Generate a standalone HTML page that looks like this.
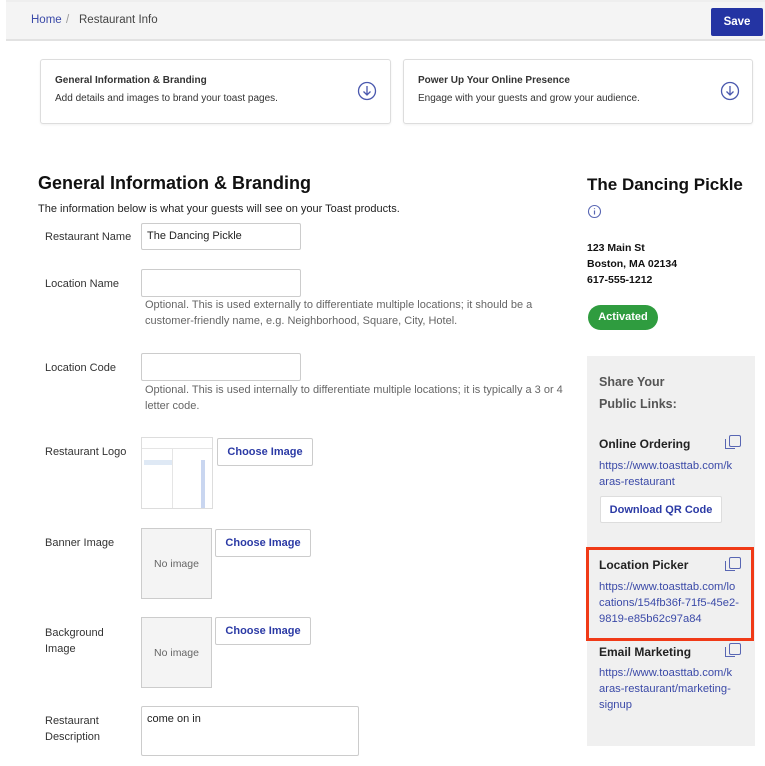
<!DOCTYPE html>
<html><head><meta charset="utf-8"><style>
*{box-sizing:border-box;margin:0;padding:0}
body{width:765px;height:766px;background:#fff;font-family:"Liberation Sans",sans-serif;color:#222;position:relative;overflow:hidden}
.a{position:absolute}
.hdr{left:6px;top:0;width:759px;height:41px;background:#f4f4f4;border-bottom:2px solid #e2e2e2;border-top:2px solid #eee}
.card{border:1px solid #ddd;border-radius:3px;background:#fff;box-shadow:0 1px 2px rgba(0,0,0,.06)}
.ct{font-size:10px;font-weight:bold;color:#333}
.cs{font-size:10px;color:#333}
.lbl{font-size:11px;color:#333}
.inp{border:1px solid #ccc;border-radius:2px;background:#fff;font-size:11px;padding:6px 5px}
.help{font-size:11px;color:#666;line-height:16px}
.btn{border:1px solid #ccc;border-radius:2px;background:#fff;color:#2b3aa5;font-weight:bold;font-size:11px;text-align:center}
.noimg{border:1px solid #ccc;background:#f4f4f4;font-size:10.5px;color:#666;display:flex;align-items:center;justify-content:center}
.lnk{color:#3b4aa8;font-size:11.2px;line-height:16px;white-space:nowrap}
.sh{font-weight:bold;font-size:12px;color:#222}
.cp{width:12px;height:12px;border:1.5px solid #5866b3;border-radius:2px}
.cp:before{content:"";position:absolute;left:-5px;top:3px;width:9px;height:9px;border-left:1.5px solid #5866b3;border-bottom:1.5px solid #5866b3}
</style></head><body>
<div class="a hdr"></div>
<div class="a" style="left:31px;top:14px;font-size:11.5px;color:#3b4aa8">Home</div>
<div class="a" style="left:66px;top:14px;font-size:11.5px;color:#999">/</div>
<div class="a" style="left:79px;top:14px;font-size:11.5px;color:#444">Restaurant Info</div>
<div class="a" style="left:711px;top:8px;width:52px;height:28px;background:#2434a3;border-radius:2px;color:#fff;font-weight:bold;font-size:11.5px;text-align:center;line-height:28px">Save</div>

<div class="a card" style="left:40px;top:59px;width:351px;height:65px"></div>
<div class="a ct" style="left:55px;top:75px">General Information &amp; Branding</div>
<div class="a cs" style="left:55px;top:93px">Add details and images to brand your toast pages.</div>
<svg class="a" style="left:357px;top:81px" width="20" height="20"><circle cx="10" cy="10" r="8.5" fill="none" stroke="#4a58ae" stroke-width="1.3"/><path d="M10 5v9M6.5 10.5L10 14l3.5-3.5" fill="none" stroke="#4a58ae" stroke-width="1.3"/></svg>
<div class="a card" style="left:403px;top:59px;width:350px;height:65px"></div>
<div class="a ct" style="left:418px;top:75px">Power Up Your Online Presence</div>
<div class="a cs" style="left:418px;top:93px">Engage with your guests and grow your audience.</div>
<svg class="a" style="left:720px;top:81px" width="20" height="20"><circle cx="10" cy="10" r="8.5" fill="none" stroke="#4a58ae" stroke-width="1.3"/><path d="M10 5v9M6.5 10.5L10 14l3.5-3.5" fill="none" stroke="#4a58ae" stroke-width="1.3"/></svg>

<div class="a" style="left:38px;top:173px;font-size:18px;font-weight:bold;color:#111">General Information &amp; Branding</div>
<div class="a" style="left:38px;top:203px;font-size:11px;color:#222">The information below is what your guests will see on your Toast products.</div>

<div class="a lbl" style="left:45px;top:231px">Restaurant Name</div>
<div class="a inp" style="left:141px;top:223px;width:160px;height:27px">The Dancing Pickle</div>
<div class="a lbl" style="left:45px;top:278px">Location Name</div>
<div class="a inp" style="left:141px;top:269px;width:160px;height:28px"></div>
<div class="a help" style="left:145px;top:297px;width:412px">Optional. This is used externally to differentiate multiple locations; it should be a customer-friendly name, e.g. Neighborhood, Square, City, Hotel.</div>
<div class="a lbl" style="left:45px;top:362px">Location Code</div>
<div class="a inp" style="left:141px;top:353px;width:160px;height:28px"></div>
<div class="a help" style="left:145px;top:382px;width:425px">Optional. This is used internally to differentiate multiple locations; it is typically a 3 or 4 letter code.</div>

<div class="a lbl" style="left:45px;top:446px">Restaurant Logo</div>
<div class="a" style="left:141px;top:437px;width:72px;height:72px;border:1px solid #ddd;background:#fff">
<div class="a" style="left:0;top:10px;width:70px;height:1px;background:#e5e5e5"></div>
<div class="a" style="left:30px;top:10px;width:1px;height:60px;background:#e5e5e5"></div>
<div class="a" style="left:2px;top:22px;width:28px;height:5px;background:#dfe9f5"></div>
<div class="a" style="left:59px;top:22px;width:4px;height:48px;background:#c9d6f0"></div>
</div>
<div class="a btn" style="left:217px;top:438px;width:96px;height:28px;line-height:26px">Choose Image</div>

<div class="a lbl" style="left:45px;top:537px">Banner Image</div>
<div class="a noimg" style="left:141px;top:528px;width:71px;height:71px">No image</div>
<div class="a btn" style="left:215px;top:529px;width:96px;height:28px;line-height:26px">Choose Image</div>
<div class="a lbl" style="left:45px;top:625px;line-height:16px">Background<br>Image</div>
<div class="a noimg" style="left:141px;top:617px;width:71px;height:71px">No image</div>
<div class="a btn" style="left:215px;top:617px;width:96px;height:28px;line-height:26px">Choose Image</div>
<div class="a lbl" style="left:45px;top:713px;line-height:16px">Restaurant<br>Description</div>
<div class="a inp" style="left:141px;top:706px;width:218px;height:50px">come on in</div>

<div class="a" style="left:587px;top:175px;font-size:17px;font-weight:bold;color:#111">The Dancing Pickle</div>
<svg class="a" style="left:587px;top:204px" width="15" height="15"><circle cx="7.5" cy="7.5" r="6" fill="none" stroke="#5866b3" stroke-width="1.1"/><path d="M7.5 6.5v4M7.5 4.3v.8" stroke="#5866b3" stroke-width="1.2"/></svg>
<div class="a" style="left:587px;top:240px;font-size:10.5px;font-weight:bold;line-height:16px;color:#111">123 Main St<br>Boston, MA 02134<br>617-555-1212</div>
<div class="a" style="left:588px;top:305px;width:70px;height:25px;background:#2f9c3f;border-radius:13px;color:#fff;font-size:11px;font-weight:bold;text-align:center;line-height:25px">Activated</div>

<div class="a" style="left:587px;top:356px;width:168px;height:390px;background:#f0f0f0"></div>
<div class="a" style="left:599px;top:371px;font-size:12.5px;font-weight:bold;color:#555;line-height:22px">Share Your<br>Public Links:</div>
<div class="a sh" style="left:599px;top:437px">Online Ordering</div>
<div class="a cp" style="left:729px;top:435px"></div>
<div class="a lnk" style="left:599px;top:458px">https://www.toasttab.com/k<br>aras-restaurant</div>
<div class="a btn" style="left:600px;top:496px;width:122px;height:27px;line-height:26px;border-color:#ddd">Download QR Code</div>
<div class="a" style="left:586px;top:547px;width:168px;height:94px;border:3px solid #f03a17"></div>
<div class="a sh" style="left:599px;top:558px">Location Picker</div>
<div class="a cp" style="left:729px;top:557px"></div>
<div class="a lnk" style="left:599px;top:579px">https://www.toasttab.com/lo<br>cations/154fb36f-71f5-45e2-<br>9819-e85b62c97a84</div>
<div class="a sh" style="left:599px;top:645px">Email Marketing</div>
<div class="a cp" style="left:729px;top:643px"></div>
<div class="a lnk" style="left:599px;top:665px">https://www.toasttab.com/k<br>aras-restaurant/marketing-<br>signup</div>
</body></html>
